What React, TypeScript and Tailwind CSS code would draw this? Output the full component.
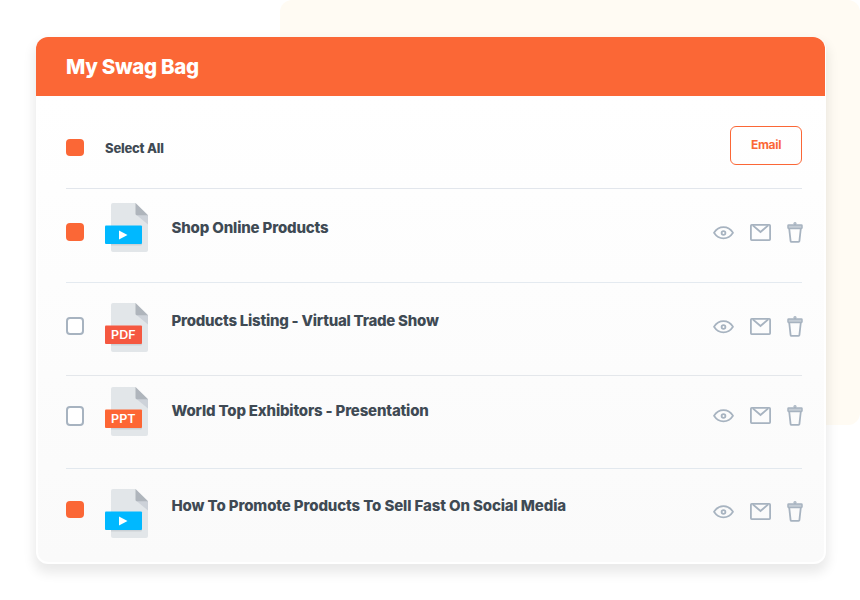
import React, { useState } from 'react';

type FileKind = 'video' | 'pdf' | 'ppt';

interface BagItem {
  id: number;
  title: string;
  kind: FileKind;
  selected: boolean;
  // vertical rhythm differs slightly from row to row
  row: string;
  box: string;
  file: string;
  text: string;
  actions: string;
}

const items: BagItem[] = [
  {
    id: 1,
    title: 'Shop Online Products',
    kind: 'video',
    selected: true,
    row: 'h-[94px] border-[#e4eaf0]',
    box: 'mt-[34px] h-[18px]',
    file: 'mt-[14px]',
    text: 'mt-[28px] tracking-[-0.16px]',
    actions: 'mt-[33px]',
  },
  {
    id: 2,
    title: 'Products Listing - Virtual Trade Show',
    kind: 'pdf',
    selected: false,
    row: 'h-[93px] border-[#e4e7eb]',
    box: 'mt-[34px] h-[18px]',
    file: 'mt-[20px]',
    text: 'mt-[27px] tracking-[-0.24px]',
    actions: 'mt-[33px]',
  },
  {
    id: 3,
    title: 'World Top Exhibitors - Presentation',
    kind: 'ppt',
    selected: false,
    row: 'h-[93px] border-[#e2e8ee]',
    box: 'mt-[30px] h-[20px]',
    file: 'mt-[11px]',
    text: 'mt-[24px] tracking-[-0.18px]',
    actions: 'mt-[29px]',
  },
  {
    id: 4,
    title: 'How To Promote Products To Sell Fast On Social Media',
    kind: 'video',
    selected: true,
    row: 'h-[93px] border-transparent',
    box: 'mt-[32px] h-[17px]',
    file: 'mt-[20px]',
    text: 'mt-[26px] tracking-[-0.12px]',
    actions: 'mt-[32px]',
  },
];

const bandColor: Record<FileKind, string> = {
  video: '#00b8ff',
  pdf: '#f55840',
  ppt: '#fd6634',
};

function FileIcon({ kind }: { kind: FileKind }) {
  return (
    <svg width="43" height="49" viewBox="0 0 43 49" className="block">
      <path d="M8 0H30.5L43 12.3V47a2 2 0 0 1-2 2H8a2 2 0 0 1-2-2V2a2 2 0 0 1 2-2Z" fill="#e2e6e9" />
      <path d="M31.5 12L43 21.5V12Z" fill="#cdd2d9" />
      <path d="M30.5 0L43 12.3H32a1.5 1.5 0 0 1-1.5-1.5Z" fill="#afb5bc" />
      <path d="M6 40H37v1a1.5 1.5 0 0 1-1.5 1.5H6Z" fill="#cbd1d6" />
      <rect x="0" y="22.6" width="37" height="18.4" rx="1" fill={bandColor[kind]} />
      {kind === 'video' ? (
        <path d="M14 27.5L22.5 32L14 36.5Z" fill="#fff" />
      ) : (
        <text
          x="18.3"
          y="36.4"
          textAnchor="middle"
          textLength="24.5"
          lengthAdjust="spacingAndGlyphs"
          fill="#fff"
          className="font-[Inter,sans-serif] text-[11.2px] font-semibold"
        >
          {kind.toUpperCase()}
        </text>
      )}
    </svg>
  );
}

function EyeIcon() {
  return (
    <svg width="21" height="14" viewBox="0 0 21 14" fill="none" stroke="#a7b3c0" className="mt-[4px]">
      <path d="M1 6.8C3.2 3.4 6.5 1.2 10.5 1.2S17.8 3.4 20 6.8C17.8 10.2 14.5 12.4 10.5 12.4S3.2 10.2 1 6.8Z" strokeWidth="1.7" strokeLinejoin="round" />
      <circle cx="10.5" cy="7" r="1.9" strokeWidth="1.8" />
    </svg>
  );
}

function MailIcon() {
  return (
    <svg width="21" height="17" viewBox="0 0 21 17" fill="none" stroke="#a7b3c0" className="mt-[2px]">
      <rect x="0.9" y="0.9" width="19.2" height="15.2" rx="0.8" strokeWidth="1.8" />
      <path d="M2.8 1.4L10.5 8L18.2 1.4" strokeWidth="1.9" />
    </svg>
  );
}

function TrashIcon() {
  return (
    <svg width="16" height="21" viewBox="0 0 16 21" fill="none" stroke="#a7b3c0">
      <circle cx="8" cy="1.6" r="1" strokeWidth="1.2" />
      <rect x="1" y="3" width="14" height="3.4" rx="0.6" strokeWidth="1.5" fill="#c4ccd5" />
      <path d="M2.2 6.5L3.6 19.2a0.8 0.8 0 0 0 .8.7h7.2a0.8 0.8 0 0 0 .8-.7L13.8 6.5" strokeWidth="1.8" />
    </svg>
  );
}

interface CheckBoxProps {
  checked: boolean;
  label: string;
  className: string;
  onToggle: () => void;
}

function CheckBox({ checked, label, className, onToggle }: CheckBoxProps) {
  return (
    <button
      role="checkbox"
      aria-checked={checked}
      aria-label={label}
      onClick={onToggle}
      className={`w-[18px] shrink-0 rounded-[4px] ${className} ${
        checked ? 'bg-[#fb6736]' : 'border-2 border-[#a7b3c0] bg-white'
      }`}
    />
  );
}

export default function App() {
  const [selected, setSelected] = useState<number[]>(items.filter(i => i.selected).map(i => i.id));
  const [all, setAll] = useState(true);

  const toggle = (id: number) =>
    setSelected(prev => (prev.includes(id) ? prev.filter(x => x !== id) : [...prev, id]));

  const toggleAll = () => {
    setSelected(all ? [] : items.map(i => i.id));
    setAll(!all);
  };

  return (
    <div className="relative h-[600px] w-[860px] overflow-hidden bg-white pl-[36px] pt-[37px] font-[Inter,sans-serif] text-[#3f4a54]">
      {/* cream backdrop behind the card */}
      <div className="absolute left-[280px] top-0 h-[425px] w-[580px] rounded-[12px] bg-[#fffbf3]" />

      <div className="relative flex h-[527px] w-[790px] flex-col rounded-[12px] bg-white shadow-[0_7px_12px_2px_rgba(0,0,0,0.085)]">
        <div className="mr-px flex h-[59px] shrink-0 items-center rounded-t-[12px] bg-[#fb6736] pl-[30px]">
          <h1 className="mt-px text-[20.5px] font-extrabold leading-[26px] tracking-[-0.32px] text-white">My Swag Bag</h1>
        </div>

        <div className="mx-[2px] mb-[2px] flex-1 rounded-b-[10px] bg-gradient-to-b from-white to-[#fafafa] pl-[28px] pr-[22px]">
          <div className="flex h-[93px] items-start border-b border-[#e2e6ec]">
            <CheckBox checked={all} label="Select All" className="mt-[43px] h-[17px]" onToggle={toggleAll} />
            <span className="ml-[21px] mt-[42px] text-[13px] font-extrabold leading-[20px] tracking-[-0.2px]">Select All</span>
            <button className="ml-auto mt-[30px] h-[39px] w-[72px] rounded-[6px] border border-[#fb6736] pb-[1px] text-[12px] font-bold tracking-[-0.3px] text-[#fb6736]">
              Email
            </button>
          </div>

          {items.map(item => (
            <div key={item.id} className={`flex items-start border-b ${item.row}`}>
              <CheckBox
                checked={selected.includes(item.id)}
                label={item.title}
                className={item.box}
                onToggle={() => toggle(item.id)}
              />
              <div className={`ml-[21px] ${item.file}`}>
                <FileIcon kind={item.kind} />
              </div>
              <span className={`ml-[23.5px] whitespace-nowrap text-[15px] font-extrabold leading-[22px] ${item.text}`}>
                {item.title}
              </span>
              <div className={`-mr-[1px] ml-auto flex items-start ${item.actions}`}>
                <EyeIcon />
                <div className="ml-[16px]"><MailIcon /></div>
                <div className="ml-[16px]"><TrashIcon /></div>
              </div>
            </div>
          ))}
        </div>
      </div>
    </div>
  );
}
